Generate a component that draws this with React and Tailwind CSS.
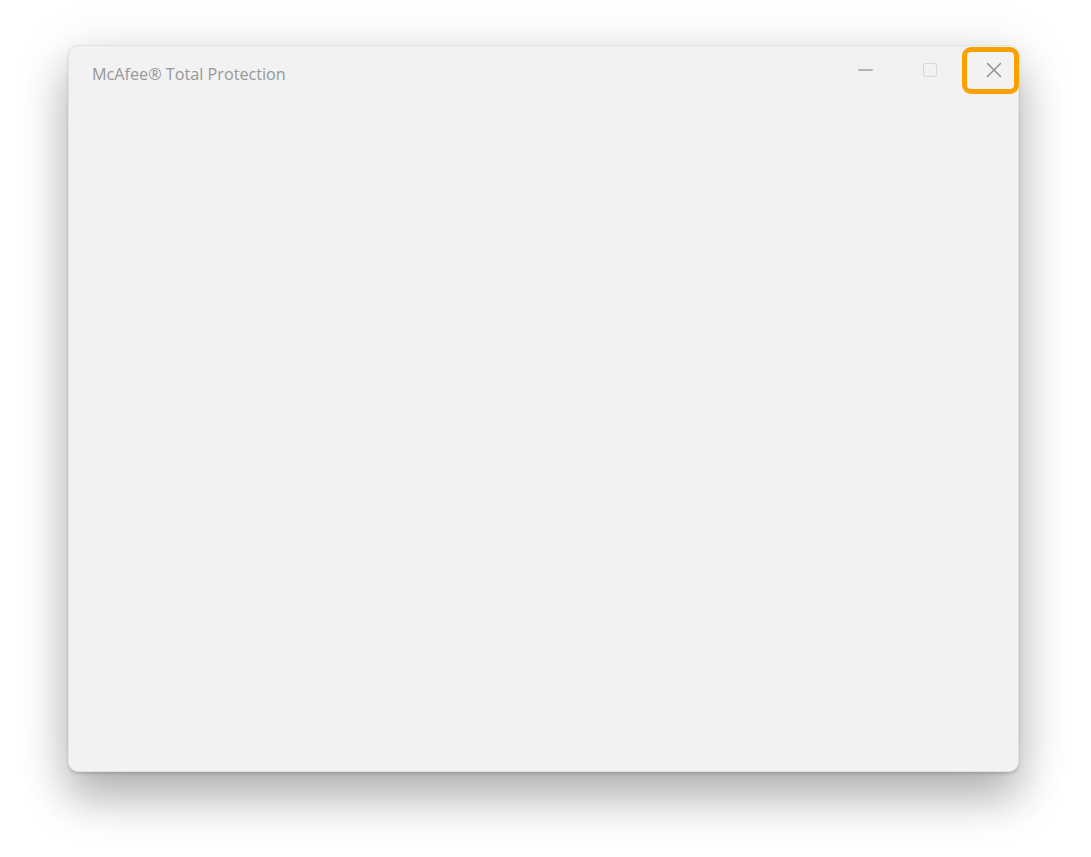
import React from 'react';

const TitleBar = () => {
  return (
    <div className="flex items-start justify-between h-[48px]">
      <div className="pl-[23px] pt-[17px] text-[16.2px] leading-[22px] text-[#979797]" style={{ fontFamily: '"Open Sans", "Noto Sans", sans-serif' }}>
        McAfee® Total Protection
      </div>
      <div className="flex items-start">
        {/* minimize */}
        <div className="w-[64px] h-[46px] flex items-center justify-center">
          <div className="w-[15px] h-[2px] bg-[#b3b3b3] rounded-full mt-[1px] -ml-[2px]" />
        </div>
        {/* maximize */}
        <div className="w-[64px] h-[46px] flex items-center justify-center">
          <div className="w-[14px] h-[14px] border-[1.5px] border-[#d6d6d6] rounded-[3px] mt-[1px]" />
        </div>
        {/* close, highlighted */}
        <div className="w-[57px] h-[47px] mt-px -mr-px flex items-center justify-center border-[5px] border-[#f8a100] rounded-[9px]">
          <svg width="16" height="16" viewBox="0 0 16 16" className="ml-[6px] -mt-[2px]">
            <path d="M1.5 1.5 L14.5 14.5 M14.5 1.5 L1.5 14.5" stroke="#8c8c8c" strokeWidth="1.4" strokeLinecap="round" />
          </svg>
        </div>
      </div>
    </div>
  );
};

const App = () => {
  return (
    <div className="min-h-[857px] w-[1091px] bg-white pt-[45px] pl-[68px]">
      <div className="w-[951px] h-[727px] bg-[#f2f2f2] rounded-[10px] border border-[#e2e2e2] shadow-[0_28px_44px_rgba(0,0,0,0.24),0_8px_55px_rgba(0,0,0,0.13),0_2px_3px_rgba(0,0,0,0.15)]">
        <TitleBar />
      </div>
    </div>
  );
};

export default App;
